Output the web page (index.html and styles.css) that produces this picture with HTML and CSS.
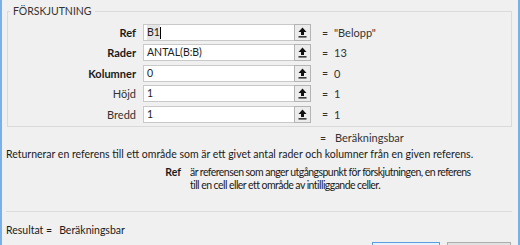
FILE: index.html
```html
<!DOCTYPE html>
<html lang="sv">
<head>
<meta charset="utf-8">
<link rel="stylesheet" href="styles.css">
</head>
<body>
<div class="window">
  <fieldset class="group">
    <legend class="legend">FÖRSKJUTNING</legend>
    <div class="rows">
      <div class="row">
        <span class="label bold">Ref</span>
        <span class="input"><span class="sel">B1</span><span class="caret"></span></span>
        <span class="picker"><svg width="9" height="11" viewBox="0 0 9 11"><path d="M4.5 0.5 L8.5 5 L6 5 L6 8 L3 8 L3 5 L0.5 5 Z" fill="#111"/><rect x="0.5" y="9.2" width="8" height="1.3" fill="#111"/></svg></span>
        <span class="eq">=</span>
        <span class="val">"Belopp"</span>
      </div>
      <div class="row">
        <span class="label bold">Rader</span>
        <span class="input">ANTAL(B:B)</span>
        <span class="picker"><svg width="9" height="11" viewBox="0 0 9 11"><path d="M4.5 0.5 L8.5 5 L6 5 L6 8 L3 8 L3 5 L0.5 5 Z" fill="#111"/><rect x="0.5" y="9.2" width="8" height="1.3" fill="#111"/></svg></span>
        <span class="eq">=</span>
        <span class="val">13</span>
      </div>
      <div class="row">
        <span class="label bold">Kolumner</span>
        <span class="input">0</span>
        <span class="picker"><svg width="9" height="11" viewBox="0 0 9 11"><path d="M4.5 0.5 L8.5 5 L6 5 L6 8 L3 8 L3 5 L0.5 5 Z" fill="#111"/><rect x="0.5" y="9.2" width="8" height="1.3" fill="#111"/></svg></span>
        <span class="eq">=</span>
        <span class="val">0</span>
      </div>
      <div class="row">
        <span class="label">Höjd</span>
        <span class="input">1</span>
        <span class="picker"><svg width="9" height="11" viewBox="0 0 9 11"><path d="M4.5 0.5 L8.5 5 L6 5 L6 8 L3 8 L3 5 L0.5 5 Z" fill="#111"/><rect x="0.5" y="9.2" width="8" height="1.3" fill="#111"/></svg></span>
        <span class="eq">=</span>
        <span class="val">1</span>
      </div>
      <div class="row">
        <span class="label">Bredd</span>
        <span class="input">1</span>
        <span class="picker"><svg width="9" height="11" viewBox="0 0 9 11"><path d="M4.5 0.5 L8.5 5 L6 5 L6 8 L3 8 L3 5 L0.5 5 Z" fill="#111"/><rect x="0.5" y="9.2" width="8" height="1.3" fill="#111"/></svg></span>
        <span class="eq">=</span>
        <span class="val">1</span>
      </div>
    </div>
  </fieldset>
  <div class="result-line"><span class="eq">=</span><span class="val">Beräkningsbar</span></div>
  <p class="desc">Returnerar en referens till ett område som är ett givet antal rader och kolumner från en given referens.</p>
  <div class="param">
    <span class="pname">Ref</span>
    <span class="ptext">är referensen som anger utgångspunkt för förskjutningen, en referens<br>till en cell eller ett område av intilliggande celler.</span>
  </div>
  <div class="sep"></div>
  <div class="resultat"><span>Resultat =</span><span class="rval">Beräkningsbar</span></div>
  <div class="buttons">
    <span class="btn primary"></span>
    <span class="btn"></span>
  </div>
</div>
</body>
</html>
```
FILE: styles.css
```css
html, body {
  margin: 0;
  padding: 0;
}
body {
  width: 520px;
  height: 245px;
  overflow: hidden;
  background: #f0f0f0;
  font-family: Lato, "Noto Sans", sans-serif;
  font-size: 10.5px;
  color: #1a1a1a;
}
.window {
  box-sizing: border-box;
  width: 520px;
  height: 245px;
  overflow: hidden;
  border-left: 2px solid #79b0e6;
  border-right: 2px solid #79b0e6;
  display: flex;
  flex-direction: column;
  position: relative;
}
.group {
  margin: 4px 0 0 5px;
  width: 505px;
  height: 123px;
  flex: none;
  box-sizing: border-box;
  border: 1px solid #dadada;
  padding: 0;
}
.legend {
  margin-left: 2px;
  padding: 0 3px;
  font-size: 10.5px;
  line-height: 15px;
  color: #333;
}
.rows {
  display: flex;
  flex-direction: column;
  gap: 3.4px;
  padding-top: 5px;
}
.row {
  display: flex;
  align-items: center;
  height: 17px;
}
.label {
  width: 128px;
  text-align: right;
  margin-right: 7px;
  color: #333;
  font-size: 11px;
}
.bold {
  font-weight: bold;
  color: #1a1a1a;
}
.input {
  box-sizing: border-box;
  width: 151px;
  height: 17px;
  background: #fff;
  border: 1px solid #c9c9c9;
  border-right: none;
  padding-left: 3px;
  line-height: 15px;
  display: flex;
  align-items: center;
  color: #222;
}
.sel {
  background: #e6e6e6;
}
.caret {
  display: inline-block;
  width: 1px;
  height: 12px;
  background: #000;
}
.picker {
  box-sizing: border-box;
  width: 17px;
  height: 17px;
  border: 1px solid #b4b4b4;
  background: #ececec;
  display: flex;
  align-items: center;
  justify-content: center;
}
.eq {
  margin-left: 11px;
  width: 12px;
  color: #333;
}
.val {
  color: #333;
  font-size: 11px;
}
.result-line {
  display: flex;
  margin: 3px 0 0 318px;
  height: 16px;
  line-height: 16px;
}
.result-line .eq {
  margin-left: 0;
  width: 15px;
}
.desc {
  margin: 0 0 0 4px;
  line-height: 16px;
  white-space: nowrap;
}
.param {
  display: flex;
  margin: 4px 0 0 0;
  line-height: 13px;
}
.pname {
  width: 179px;
  text-align: right;
  font-weight: bold;
  margin-right: 9px;
  flex: none;
}
.ptext {
  white-space: nowrap;
  letter-spacing: -0.55px;
}
.sep {
  flex: none;
  margin: 19px 6px 0 4px;
  height: 1px;
  background: #dcdcdc;
}
.resultat {
  display: flex;
  margin: 10px 0 0 4px;
  line-height: 16px;
}
.rval {
  margin-left: 7px;
}
.buttons {
  position: absolute;
  left: 370px;
  top: 242px;
  display: flex;
  gap: 7px;
}
.btn {
  box-sizing: border-box;
  width: 64px;
  height: 3px;
  border: 1px solid #adadad;
  border-bottom: none;
  background: #e1e1e1;
}
.btn.primary {
  width: 68px;
  border-color: #5a9ee0;
  background: #e5f1fb;
}
```
